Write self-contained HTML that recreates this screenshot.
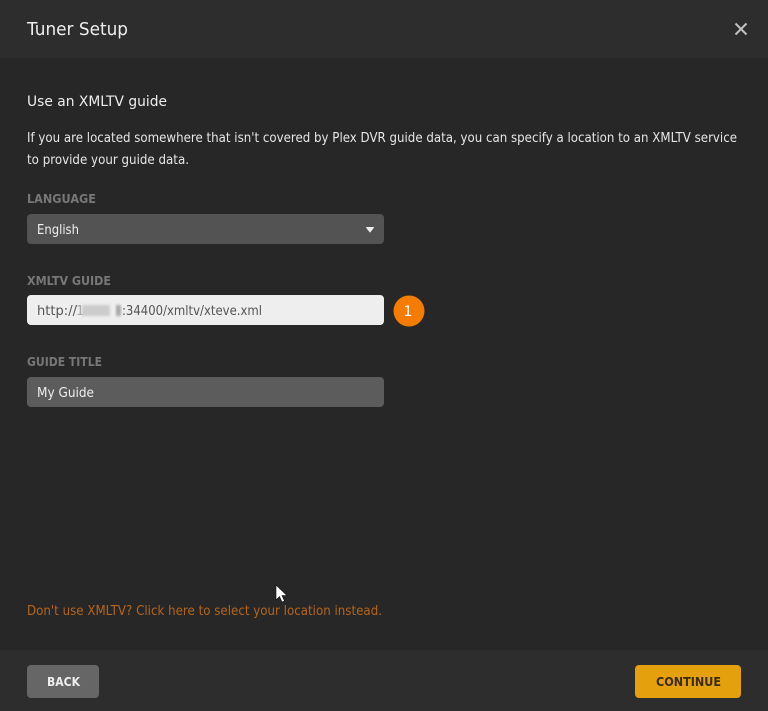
<!DOCTYPE html>
<html>
<head>
<meta charset="utf-8">
<title>Tuner Setup</title>
<style>
html,body{margin:0;padding:0;background:#272727;width:768px;height:711px;overflow:hidden}
svg{display:block}
text{font-family:"DejaVu Sans","Liberation Sans",sans-serif}
</style>
</head>
<body>
<svg width="768" height="711" viewBox="0 0 768 711" xmlns="http://www.w3.org/2000/svg">
<defs><filter id="b" x="-20%" y="-20%" width="140%" height="140%"><feGaussianBlur stdDeviation="1.2"/></filter></defs>
<rect width="768" height="711" fill="#272727"/>
<rect width="768" height="58" fill="#2d2d2d"/>
<rect y="650" width="768" height="61" fill="#2d2d2d"/>

<text x="27" y="35" font-size="18" fill="#eeeeee" textLength="101" lengthAdjust="spacingAndGlyphs">Tuner Setup</text>
<path d="M735.5 23.5L746.5 34.5M746.5 23.5L735.5 34.5" stroke="#c0c0c0" stroke-width="2" fill="none"/>

<text x="27" y="106" font-size="14" fill="#eeeeee" textLength="140" lengthAdjust="spacingAndGlyphs">Use an XMLTV guide</text>
<text x="27" y="142" font-size="13" fill="#e6e6e6" textLength="710" lengthAdjust="spacingAndGlyphs">If you are located somewhere that isn't covered by Plex DVR guide data, you can specify a location to an XMLTV service</text>
<text x="27" y="164" font-size="13" fill="#e6e6e6" textLength="162" lengthAdjust="spacingAndGlyphs">to provide your guide data.</text>

<text x="27" y="203" font-size="12" font-weight="bold" fill="#777777" textLength="69" lengthAdjust="spacingAndGlyphs">LANGUAGE</text>
<rect x="27" y="214" width="357" height="30" rx="4" fill="#535353"/>
<text x="37" y="234" font-size="13" fill="#eeeeee" textLength="42" lengthAdjust="spacingAndGlyphs">English</text>
<path d="M366.5 227.5H373.5L370 232Z" fill="#eeeeee" stroke="#eeeeee" stroke-width="1" stroke-linejoin="round"/>

<text x="27" y="285" font-size="12" font-weight="bold" fill="#777777" textLength="84" lengthAdjust="spacingAndGlyphs">XMLTV GUIDE</text>
<rect x="27" y="295" width="357" height="30" rx="4" fill="#eeeeee"/>
<text x="37" y="315" font-size="13" fill="#555555" textLength="40" lengthAdjust="spacingAndGlyphs">http://</text>
<text x="76" y="315" font-size="13" fill="#a5a5a5">1</text>
<rect x="82" y="305" width="28" height="11" fill="#cccccc" filter="url(#b)"/>
<rect x="116" y="305" width="5" height="11" fill="#a8a8a8" filter="url(#b)"/>
<text x="122" y="315" font-size="13" fill="#555555" textLength="140" lengthAdjust="spacingAndGlyphs">:34400/xmltv/xteve.xml</text>
<circle cx="409" cy="311" r="15.5" fill="#f57c00"/>
<text x="408" y="316" font-size="14" fill="#ffffff" text-anchor="middle">1</text>

<text x="27" y="366" font-size="12" font-weight="bold" fill="#777777" textLength="75" lengthAdjust="spacingAndGlyphs">GUIDE TITLE</text>
<rect x="27" y="377" width="357" height="30" rx="4" fill="#5c5c5c"/>
<text x="37" y="397" font-size="13" fill="#eeeeee" textLength="57" lengthAdjust="spacingAndGlyphs">My Guide</text>

<text x="27" y="615" font-size="13" fill="#b5651d" textLength="355" lengthAdjust="spacingAndGlyphs">Don't use XMLTV? Click here to select your location instead.</text>
<path d="M276 585V600L279.5 596.5L282 602L284.5 601L282 595.5H287Z" fill="#ffffff" stroke="#111111" stroke-width="0.6"/>

<rect x="27" y="665" width="72" height="33" rx="4" fill="#666666"/>
<text x="47" y="686" font-size="12" font-weight="bold" fill="#eeeeee" textLength="33" lengthAdjust="spacingAndGlyphs">BACK</text>
<rect x="635" y="665" width="106" height="33" rx="4" fill="#e5a00d"/>
<text x="656" y="686" font-size="12" font-weight="bold" fill="#3a2c0c" textLength="65" lengthAdjust="spacingAndGlyphs">CONTINUE</text>
</svg>
</body>
</html>
